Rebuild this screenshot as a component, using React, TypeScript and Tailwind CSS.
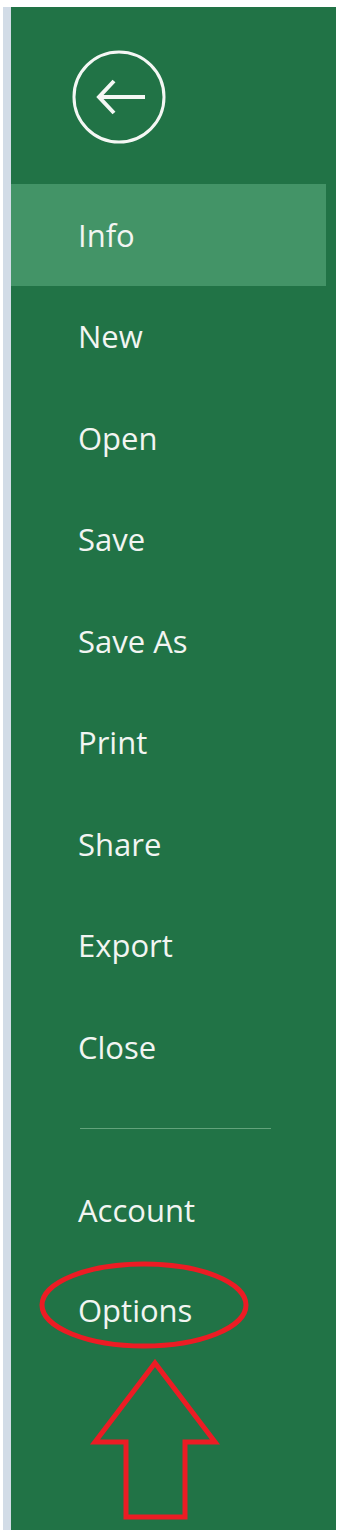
import React from "react";

const items = ["New", "Open", "Save", "Save As", "Print", "Share", "Export", "Close"];

export default function App() {
  return (
    <div className="w-[342px] h-[1536px] bg-white pt-[7px] pb-[6px] pl-[3px] pr-[6px] flex">
      <div className="w-[8px] bg-[#d2dce7]" />
      <div
        className="relative flex-1 bg-[#217346] flex flex-col text-[#f2f5f2]"
        style={{ fontFamily: '"Open Sans", "Noto Sans", sans-serif' }}
      >
        <div className="h-[177px] shrink-0 pl-[61px] pt-[43px]">
          <svg width="94" height="94" viewBox="0 0 94 94">
            <circle cx="47" cy="47" r="45" fill="none" stroke="#f4f7f4" strokeWidth="3" />
            <path d="M27 47 H73" stroke="#f4f7f4" strokeWidth="4" fill="none" />
            <path d="M42 31 L27 47 L42 63" stroke="#f4f7f4" strokeWidth="4" fill="none" strokeLinejoin="miter" />
          </svg>
        </div>
        <div className="h-[102px] shrink-0 bg-[#439467] mr-[10px] flex items-center pl-[67px] text-[31px] leading-none">
          Info
        </div>
        {items.map((t) => (
          <div key={t} className="h-[101.5px] shrink-0 flex items-center pl-[67px] text-[31px] leading-none">
            {t}
          </div>
        ))}
        <div className="mt-[30px] ml-[69px] w-[191px] h-[1px] bg-[#62a37b] shrink-0" />
        <div className="mt-[31px] h-[100px] shrink-0 flex items-center pl-[67px] text-[31px] leading-none">Account</div>
        <div className="h-[100px] shrink-0 flex items-center pl-[67px] text-[31px] leading-none">Options</div>
        <svg className="absolute left-0 top-0 pointer-events-none" width="325" height="1523" viewBox="0 0 325 1523">
          <ellipse cx="133" cy="1298" rx="102" ry="41" fill="none" stroke="#ec1c24" strokeWidth="5" />
          <path d="M144 1356 L204 1435 L174 1435 L174 1510 L115 1510 L115 1435 L84 1435 Z" fill="none" stroke="#ec1c24" strokeWidth="5" strokeLinejoin="miter" />
        </svg>
      </div>
    </div>
  );
}
